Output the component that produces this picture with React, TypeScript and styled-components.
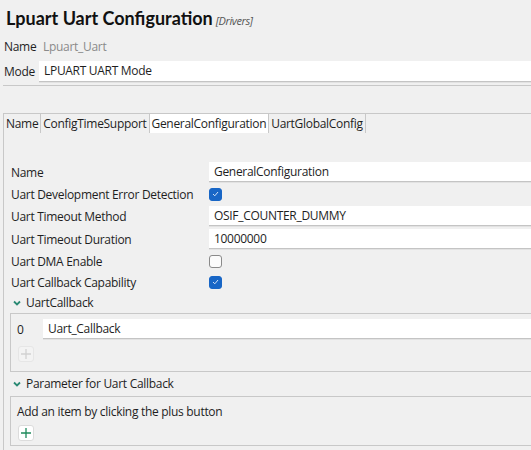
import { FC } from "react";
import styled, { createGlobalStyle } from "styled-components";

const GlobalStyle = createGlobalStyle`
  html, body {
    margin: 0;
    padding: 0;
    background: #f0f0f0;
    overflow: hidden;
  }
  body {
    font-family: "Open Sans", "Noto Sans", sans-serif;
    font-size: 12px;
    letter-spacing: -0.3px;
    color: #1e1e1e;
  }
`;

const PageStyled = styled.div`
  width: 545px;
  height: 450px;
  display: flex;
  flex-direction: column;
`;

const TitleStyled = styled.div`
  display: flex;
  align-items: baseline;
  gap: 3px;
  padding: 7px 0 0 6px;
  height: 34px;
  box-sizing: border-box;
  & > h1 {
    margin: 0;
    font-family: Lato, "Open Sans", sans-serif;
    font-size: 18px;
    font-weight: 700;
    letter-spacing: 0;
    color: #111;
  }
  & > span {
    font-size: 11px;
    font-style: italic;
    letter-spacing: -0.4px;
    color: #555;
  }
`;

const HeadRowStyled = styled.div<{ height: number }>`
  display: grid;
  grid-template-columns: 35px 1fr;
  align-items: center;
  height: ${(props) => props.height}px;
  padding-left: 4px;
`;

const MutedValue = styled.span`
  color: #8a8a8a;
  padding-left: 4px;
`;

const InputStyled = styled.div<{ height?: number }>`
  display: flex;
  align-items: center;
  height: ${(props) => props.height ?? 19}px;
  background: #ffffff;
  border-bottom: 1px solid #c4c4c4;
  box-shadow: 0 1px 0 #e2e2e2;
  padding-left: 5px;
  color: #1e1e1e;
`;

const SeparatorStyled = styled.div`
  height: 1px;
  margin: 1px 0 0 3px;
  background: #c8c8c8;
`;

const TabBarStyled = styled.div`
  display: flex;
  margin: 27px 0 0 3px;
  border-top: 1px solid #c8c8c8;
  border-left: 1px solid #c8c8c8;
  height: 19px;
`;

const TabStyled = styled.div<{ active?: boolean }>`
  display: flex;
  align-items: center;
  padding: 0 2px 0 2px;
  border-right: 1px solid #c8c8c8;
  background: ${(props) => (props.active ? "#ffffff" : "#f0f0f0")};
  white-space: nowrap;
`;

const TabFillerStyled = styled.div`
  flex: 1;
`;

const PanelStyled = styled.div`
  flex: 1;
  margin-left: 3px;
  border-left: 1px solid #c8c8c8;
  padding: 28px 0 0 6px;
  display: flex;
  flex-direction: column;
`;

const FormRowStyled = styled.div<{ height: number }>`
  display: grid;
  grid-template-columns: 198px 1fr;
  align-items: center;
  height: ${(props) => props.height}px;
  padding-left: 1px;
`;

const CheckboxStyled = styled.div<{ checked?: boolean }>`
  width: 13px;
  height: 13px;
  box-sizing: border-box;
  border-radius: 3px;
  display: flex;
  align-items: center;
  justify-content: center;
  background: ${(props) => (props.checked ? "#1866c6" : "#fbfbfb")};
  border: 1px solid ${(props) => (props.checked ? "#1866c6" : "#8a8a8a")};
`;

const SectionHeaderStyled = styled.div<{ height?: number }>`
  display: flex;
  align-items: center;
  gap: 5px;
  height: ${(props) => props.height ?? 19}px;
  padding-left: 3px;
`;

const SectionBoxStyled = styled.div<{ height: number }>`
  display: flex;
  flex-direction: column;
  height: ${(props) => props.height}px;
  box-sizing: border-box;
  margin: 1px 0 0 0;
  border-top: 1px solid #c8c8c8;
  border-bottom: 1px solid #c8c8c8;
  border-left: 1px solid #c8c8c8;
  padding: 5px 0 0 6px;
`;

const ListRowStyled = styled.div`
  display: grid;
  grid-template-columns: 26px 1fr;
  align-items: center;
  height: 20px;
`;

const PlusButtonStyled = styled.div<{ disabled?: boolean }>`
  width: 16px;
  height: 16px;
  box-sizing: border-box;
  margin: ${(props) => (props.disabled ? "7px" : "5px")} 0 0 1px;
  border-radius: 3px;
  display: flex;
  align-items: center;
  justify-content: center;
  background: ${(props) => (props.disabled ? "#f3f3f3" : "#ffffff")};
  border: 1px solid ${(props) => (props.disabled ? "#e6e6e6" : "#dcdcdc")};
`;

const HintStyled = styled.div`
  height: 18px;
  display: flex;
  align-items: center;
`;

const Check: FC = () => (
  <svg width="7" height="6" viewBox="0 0 7 6">
    <polyline
      points="1,3 2.8,4.8 6,1"
      fill="none"
      stroke="#cfe0f6"
      strokeWidth="1"
    />
  </svg>
);

const Chevron: FC = () => (
  <svg width="8" height="6" viewBox="0 0 8 6">
    <polyline
      points="1,1.5 4,4.5 7,1.5"
      fill="none"
      stroke="#2b8a74"
      strokeWidth="1.8"
    />
  </svg>
);

const Plus: FC<{ color: string }> = ({ color }) => (
  <svg width="12" height="12" viewBox="0 0 12 12">
    <path d="M6 1v10M1 6h10" stroke={color} strokeWidth="1.3" />
  </svg>
);

const App: FC = () => {
  return (
    <PageStyled>
      <GlobalStyle />
      <TitleStyled>
        <h1>Lpuart Uart Configuration</h1>
        <span>[Drivers]</span>
      </TitleStyled>
      <HeadRowStyled height={24}>
        <span>Name</span>
        <MutedValue>Lpuart_Uart</MutedValue>
      </HeadRowStyled>
      <HeadRowStyled height={26}>
        <span>Mode</span>
        <InputStyled height={20}>LPUART UART Mode</InputStyled>
      </HeadRowStyled>
      <SeparatorStyled />
      <TabBarStyled>
        <TabStyled>Name</TabStyled>
        <TabStyled>ConfigTimeSupport</TabStyled>
        <TabStyled active>GeneralConfiguration</TabStyled>
        <TabStyled>UartGlobalConfig</TabStyled>
        <TabFillerStyled />
      </TabBarStyled>
      <PanelStyled>
        <FormRowStyled height={22}>
          <span>Name</span>
          <InputStyled>GeneralConfiguration</InputStyled>
        </FormRowStyled>
        <FormRowStyled height={22}>
          <span>Uart Development Error Detection</span>
          <CheckboxStyled checked>
            <Check />
          </CheckboxStyled>
        </FormRowStyled>
        <FormRowStyled height={22}>
          <span>Uart Timeout Method</span>
          <InputStyled>OSIF_COUNTER_DUMMY</InputStyled>
        </FormRowStyled>
        <FormRowStyled height={24}>
          <span>Uart Timeout Duration</span>
          <InputStyled>10000000</InputStyled>
        </FormRowStyled>
        <FormRowStyled height={20}>
          <span>Uart DMA Enable</span>
          <CheckboxStyled />
        </FormRowStyled>
        <FormRowStyled height={22}>
          <span>Uart Callback Capability</span>
          <CheckboxStyled checked>
            <Check />
          </CheckboxStyled>
        </FormRowStyled>
        <SectionHeaderStyled>
          <Chevron />
          <span>UartCallback</span>
        </SectionHeaderStyled>
        <SectionBoxStyled height={59}>
          <ListRowStyled>
            <span>0</span>
            <InputStyled>Uart_Callback</InputStyled>
          </ListRowStyled>
          <PlusButtonStyled disabled>
            <Plus color="#d2d2d2" />
          </PlusButtonStyled>
        </SectionBoxStyled>
        <SectionHeaderStyled height={23}>
          <Chevron />
          <span>Parameter for Uart Callback</span>
        </SectionHeaderStyled>
        <SectionBoxStyled height={50}>
          <HintStyled>Add an item by clicking the plus button</HintStyled>
          <PlusButtonStyled>
            <Plus color="#1f8a5c" />
          </PlusButtonStyled>
        </SectionBoxStyled>
      </PanelStyled>
    </PageStyled>
  );
};

export default App;
